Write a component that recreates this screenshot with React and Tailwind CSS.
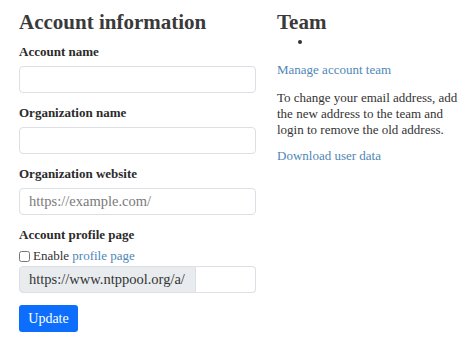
import React from "react";

const Field = ({ label, placeholder }) => (
  <div className="mb-[12px]">
    <label className="block mb-[6px] text-[13px] font-bold leading-[16px] text-[#2b2b2b]">
      {label}
    </label>
    <input
      type="text"
      placeholder={placeholder}
      className="block w-full h-[27px] rounded-[4px] border border-[#dcdfe3] bg-white px-[9px] text-[14.5px] text-[#333] placeholder:text-[#7a7a7a] outline-none"
    />
  </div>
);

export default function App() {
  return (
    <div
      className="flex gap-[21px] px-[19px] pt-[10px] text-[#333]"
      style={{ fontFamily: "'Liberation Serif', 'DejaVu Serif', serif" }}
    >
      <div className="w-[237px] shrink-0">
        <h2 className="mb-[9px] text-[21px] leading-[25px] font-bold text-[#3a3a3a]">
          Account information
        </h2>
        <Field label="Account name" />
        <Field label="Organization name" />
        <Field label="Organization website" placeholder="https://example.com/" />
        <div className="mb-[12px]">
          <div className="mb-[5px] text-[13px] font-bold leading-[16px] text-[#2b2b2b]">
            Account profile page
          </div>
          <label className="flex items-center gap-[3px] text-[13px] leading-[16px]">
            <input type="checkbox" className="h-[11px] w-[11px]" />
            <span>
              Enable <a className="text-[#4f87b7]">profile page</a>
            </span>
          </label>
          <div className="flex h-[27px] mt-[2px]">
            <span className="flex items-center rounded-l-[4px] border border-[#dcdfe3] bg-[#e9ecef] px-[9px] text-[14.5px] w-[177px] shrink-0">
              https://www.ntppool.org/a/
            </span>
            <input
              type="text"
              className="min-w-0 flex-1 rounded-r-[4px] border border-l-0 border-[#dcdfe3] bg-white outline-none"
            />
          </div>
        </div>
        <button className="h-[27px] w-[59px] rounded-[3px] bg-[#0d6efd] text-[14px] text-white">
          Update
        </button>
      </div>
      <div className="w-[192px] shrink-0">
        <h2 className="text-[21px] leading-[25px] font-bold text-[#3a3a3a]">Team</h2>
        <ul className="list-disc pl-[36px] mt-[2px] mb-[15px] text-[13px] leading-[10px]">
          <li>&nbsp;</li>
        </ul>
        <p className="mb-[12px] text-[13px] leading-[16px]">
          <a className="text-[#4f87b7]">Manage account team</a>
        </p>
        <p className="mb-[10px] text-[13px] leading-[16px]">
          To change your email address, add the new address to the team and login to remove the old address.
        </p>
        <p className="text-[13px] leading-[16px]">
          <a className="text-[#4f87b7]">Download user data</a>
        </p>
      </div>
    </div>
  );
}
